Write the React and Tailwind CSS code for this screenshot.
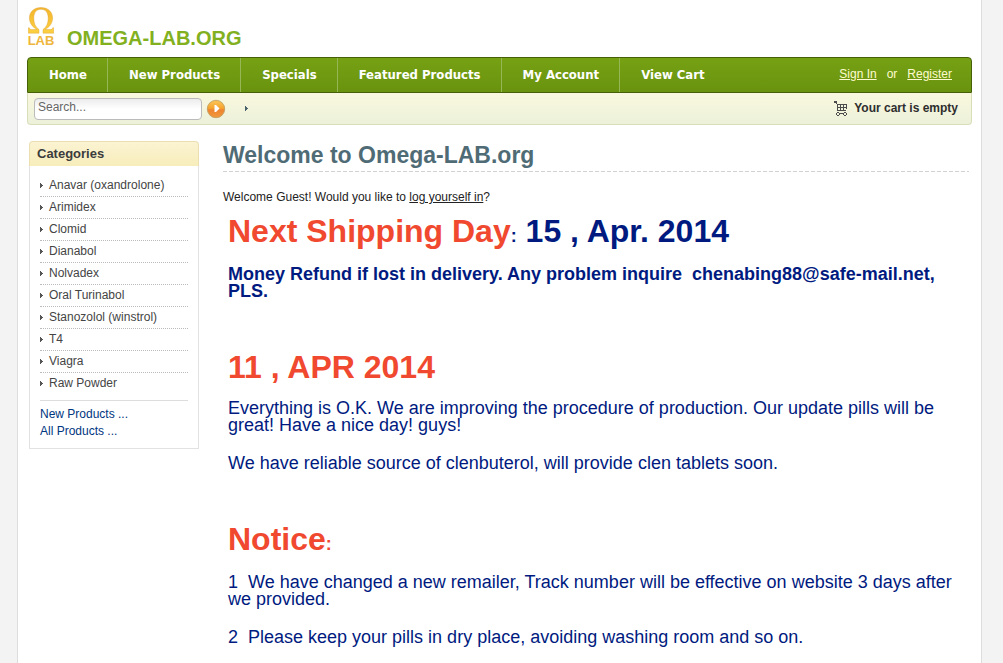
import React from "react";

const navItems = ["Home", "New Products", "Specials", "Featured Products", "My Account", "View Cart"];

const categories = [
  "Anavar (oxandrolone)",
  "Arimidex",
  "Clomid",
  "Dianabol",
  "Nolvadex",
  "Oral Turinabol",
  "Stanozolol (winstrol)",
  "T4",
  "Viagra",
  "Raw Powder",
];

function Arrow({ className }) {
  return (
    <svg className={className} width="3" height="5" viewBox="0 0 3 5" shapeRendering="crispEdges" aria-hidden="true">
      <path d="M0 0h1v1h1v1h1v1h-1v1h-1v1h-1z" fill="currentColor" />
    </svg>
  );
}

function Logo() {
  return (
    <a href="#" className="flex items-end gap-3 text-[20px] leading-6 font-bold text-[#82b01e]">
      <span className="flex w-7 flex-col items-center pb-[3px] text-[#efb63c]">
        <svg width="26" height="28" viewBox="0 0 26 28" aria-hidden="true">
          <defs>
            <linearGradient id="omega" x1="0" y1="0" x2="0" y2="1">
              <stop offset="0" stopColor="#f3b52c" />
              <stop offset="1" stopColor="#fcd042" />
            </linearGradient>
          </defs>
          <path
            d="M13 .5C20 .5 24.600 4.800 24.600 11c0 5-3 9.200-7.600 11.500h5.500c1.400 0 1.900-.5 2.200-1.700h1v5.400H15v-3.700c3.500-2.300 5.200-6.300 5.200-11.300C20.200 5.600 17.600 2.300 13 2.300S5.800 5.600 5.800 11.200c0 5 1.700 9 5.200 11.300v3.700H.3v-5.400h1c.3 1.200.8 1.700 2.200 1.700H9C4.400 20.200 1.400 16 1.400 11 1.400 4.800 6 .5 13 .5z"
            fill="url(#omega)"
            stroke="#dca032"
            strokeWidth=".4"
          />
        </svg>
        <span className="text-[13px] leading-3">LAB</span>
      </span>
      <span>OMEGA-LAB.ORG</span>
    </a>
  );
}

function CartIcon() {
  return (
    <svg width="13" height="15" viewBox="0 0 13 15" fill="#4c4c4c" shapeRendering="crispEdges" aria-hidden="true">
      <path d="M0 0h3v1h-3zM0 1h3v1h-3zM2 2h1v1h-1zM3 3h10v1h-10zM3 4h1v6h-1zM12 4h1v4h-1zM6 4h1v5h-1zM9 4h1v5h-1zM4 6h8v1h-8zM4 9h8v1h-8zM3 11h2v1h-2zM10 11h2v1h-2zM5 12h5v1h-5zM2 12h1v2h-1zM5 12h1v2h-1zM9 12h1v2h-1zM12 12h1v2h-1zM3 14h2v1h-2zM10 14h2v1h-2z" />
    </svg>
  );
}

function GoButton() {
  return (
    <button type="submit" aria-label="Search" className="ml-1 cursor-pointer">
      <svg width="20" height="20" viewBox="0 0 20 20" aria-hidden="true">
        <defs>
          <linearGradient id="go" x1="0" y1="0" x2="0" y2="1">
            <stop offset="0" stopColor="#fbc65a" />
            <stop offset=".45" stopColor="#f6a52f" />
            <stop offset=".55" stopColor="#ee8430" />
            <stop offset="1" stopColor="#f29a3c" />
          </linearGradient>
        </defs>
        <circle cx="10" cy="10" r="8.700" fill="url(#go)" stroke="#bd9a5d" strokeWidth=".8" />
        <path d="M8.500 6h1.500l3.500 3.500-3.500 3.500h-1.500z" fill="#fff" />
      </svg>
    </button>
  );
}

function Header() {
  return (
    <header>
      <div className="flex h-[57px] items-end pb-[7px]">
        <Logo />
      </div>
      <div className="flex h-9 items-stretch justify-between rounded-t-[4px] border border-[#466008] bg-linear-to-b from-[#76a114] to-[#69930e]">
        <nav className="flex font-['DejaVu_Sans_Condensed','DejaVu_Sans',sans-serif] text-[13px] font-bold text-white">
          {navItems.map((item) => (
            <a key={item} href="#" className="flex items-center border-r border-[#97b756] pr-5 pl-[21px] last:border-r-0">
              {item}
            </a>
          ))}
        </nav>
        <div className="flex items-center gap-[10px] pr-[19px] pb-[2px] text-[#fffbd0]">
          <a href="#" className="underline">Sign In</a>
          <span>or</span>
          <a href="#" className="underline">Register</a>
        </div>
      </div>
      <div className="flex h-8 items-center justify-between rounded-b-[4px] border border-t-0 border-[#d8ddba] bg-linear-to-b from-[#f9f8de] to-[#edf1da] pl-[6px] pr-[13px]">
        <form className="flex items-center" onSubmit={(e) => e.preventDefault()}>
          <input
            type="text"
            aria-label="Search"
            placeholder="Search..."
            className="h-[22px] w-[168px] rounded-[4px] border border-[#bbb] bg-linear-to-b from-[#ececec] via-white to-white px-[3px] pb-1 text-[12px] placeholder:text-[#666] outline-none"
          />
          <GoButton />
          <Arrow className="ml-[19px] text-[#48636b]" />
        </form>
        <a href="#" className="flex items-center gap-[7px] pb-px font-bold text-[#2e2e2e]">
          <CartIcon />
          Your cart is empty
        </a>
      </div>
    </header>
  );
}

function Sidebar() {
  return (
    <aside className="ml-[2px] w-[170px] shrink-0 self-start">
      <h2 className="flex h-[25px] items-center rounded-t-[4px] border border-b-0 border-[#ebdfb2] bg-linear-to-b from-[#fbf3d2] to-[#f7edbb] px-[7px] text-[13px] font-bold text-[#3c3c3c]">
        Categories
      </h2>
      <div className="border border-t-0 border-[#e2e2e2] px-[10px] pt-[9px] pb-2">
        <ul className="text-[#444]">
          {categories.map((name) => (
            <li key={name} className="h-[22px] border-b border-dotted border-[#bbb] last:border-b-0">
              <a href="#" className="flex h-5 items-center gap-[6px]">
                <Arrow className="text-[#555]" />
                {name}
              </a>
            </li>
          ))}
        </ul>
        <div className="mt-[5px] flex flex-col border-t border-[#ddd] pt-[5px] leading-[17px] text-[#003580]">
          <a href="#">New Products ...</a>
          <a href="#">All Products ...</a>
        </div>
      </div>
    </aside>
  );
}

function DashedRule() {
  return <div className="mr-[3px] h-px bg-[repeating-linear-gradient(90deg,#d2d2d2_0_4px,transparent_4px_6px)]" />;
}

function Main() {
  return (
    <main className="min-w-0 flex-1">
      <h1 className="h-[30px] text-[23px] leading-7 font-bold text-[#4f6b75]">Welcome to Omega-LAB.org</h1>
      <DashedRule />
      <p className="mt-[17px] leading-4 text-[#222]">
        Welcome Guest! Would you like to <a href="#" className="underline">log yourself in</a>?
      </p>
      <div className="pt-[10px] pr-5 pb-4 pl-[5px] text-[18px] leading-[17px] text-[#001a80]">
        <h2 className="text-[32px] leading-8 font-bold">
          <span className="text-[#f04930]">Next Shipping Day</span>
          <span className="text-[18px] leading-none">:</span> 15 , Apr. 2014
        </h2>
        <p className="mt-[19px] font-bold">
          Money Refund if lost in delivery. Any problem inquire&nbsp; chenabing88@safe-mail.net, PLS.
        </p>
        <h2 className="mt-[51px] text-[32px] leading-8 font-bold text-[#f04930]">11 , APR 2014</h2>
        <p className="mt-[17px]">
          Everything is O.K. We are improving the procedure of production. Our update pills will be great! Have a nice day! guys!
        </p>
        <p className="mt-[21px]">We have reliable source of clenbuterol, will provide clen tablets soon.</p>
        <h2 className="mt-[51px] text-[32px] leading-8 font-bold text-[#f04930]">
          Notice<span className="text-[18px] leading-none">:</span>
        </h2>
        <p className="mt-[19px]">
          1&nbsp; We have changed a new remailer, Track number will be effective on website 3 days after we provided.
        </p>
        <p className="mt-[21px]">2&nbsp; Please keep your pills in dry place, avoiding washing room and so on.</p>
      </div>
    </main>
  );
}

export default function App() {
  return (
    <div className="min-h-screen bg-[#f3f3f3] pr-[21px] pl-[17px] font-['Liberation_Sans',Arial,sans-serif] text-[12px]">
      <div className="min-h-screen border-x border-[#ddd] bg-white px-[9px]">
        <Header />
        <div className="mt-4 flex gap-6">
          <Sidebar />
          <Main />
        </div>
      </div>
    </div>
  );
}
